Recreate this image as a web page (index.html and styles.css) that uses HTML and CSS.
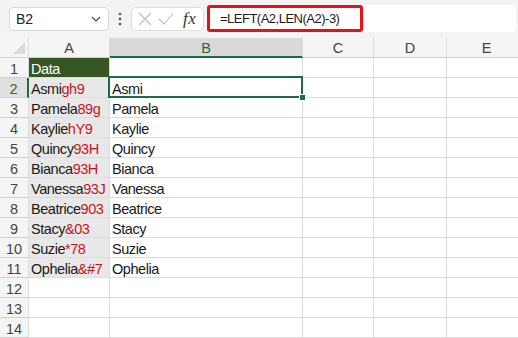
FILE: index.html
```html
<!DOCTYPE html>
<html>
<head>
<meta charset="utf-8">
<link rel="stylesheet" href="styles.css">
</head>
<body>
<div class="app">
  <div class="toolbar">
    <div class="namebox">
      <span class="nb-text">B2</span>
      <svg class="chev" width="10" height="6" viewBox="0 0 10 6"><path d="M1 1 L5 5 L9 1" fill="none" stroke="#444" stroke-width="1.2"/></svg>
    </div>
    <svg class="kebab" width="4" height="14" viewBox="0 0 4 14"><circle cx="2" cy="2" r="1.3" fill="#555"/><circle cx="2" cy="7" r="1.3" fill="#555"/><circle cx="2" cy="12" r="1.3" fill="#555"/></svg>
    <div class="fnbox">
      <svg class="ico" width="14" height="14" viewBox="0 0 14 14"><path d="M1 1 L13 13 M13 1 L1 13" fill="none" stroke="#bdbdbd" stroke-width="1.1"/></svg>
      <svg class="ico" width="16" height="14" viewBox="0 0 16 14"><path d="M1 7 L6 12 L15 1.5" fill="none" stroke="#bdbdbd" stroke-width="1.1"/></svg>
      <span class="fx">fx</span>
    </div>
    <div class="formula">
      <span class="hl">=LEFT(A2,LEN(A2)-3)</span>
    </div>
  </div>
  <div class="sheet">
    <div class="h corner"></div>
    <div class="h col">A</div>
    <div class="h col selcol">B</div>
    <div class="h col">C</div>
    <div class="h col">D</div>
    <div class="h col">E</div>

    <div class="h row">1</div>
    <div class="c head">Data</div>
    <div class="c"></div><div class="c"></div><div class="c"></div><div class="c"></div>

    <div class="h row selrow">2</div>
    <div class="c src">Asmi<span class="r">gh9</span></div>
    <div class="c sel">Asmi<span class="handle"></span></div><div class="c"></div><div class="c"></div><div class="c"></div>

    <div class="h row">3</div>
    <div class="c src">Pamela<span class="r">89g</span></div>
    <div class="c">Pamela</div><div class="c"></div><div class="c"></div><div class="c"></div>

    <div class="h row">4</div>
    <div class="c src">Kaylie<span class="r">hY9</span></div>
    <div class="c">Kaylie</div><div class="c"></div><div class="c"></div><div class="c"></div>

    <div class="h row">5</div>
    <div class="c src">Quincy<span class="r">93H</span></div>
    <div class="c">Quincy</div><div class="c"></div><div class="c"></div><div class="c"></div>

    <div class="h row">6</div>
    <div class="c src">Bianca<span class="r">93H</span></div>
    <div class="c">Bianca</div><div class="c"></div><div class="c"></div><div class="c"></div>

    <div class="h row">7</div>
    <div class="c src">Vanessa<span class="r">93J</span></div>
    <div class="c">Vanessa</div><div class="c"></div><div class="c"></div><div class="c"></div>

    <div class="h row">8</div>
    <div class="c src">Beatrice<span class="r">903</span></div>
    <div class="c">Beatrice</div><div class="c"></div><div class="c"></div><div class="c"></div>

    <div class="h row">9</div>
    <div class="c src">Stacy<span class="r">&amp;03</span></div>
    <div class="c">Stacy</div><div class="c"></div><div class="c"></div><div class="c"></div>

    <div class="h row">10</div>
    <div class="c src">Suzie<span class="r">*78</span></div>
    <div class="c">Suzie</div><div class="c"></div><div class="c"></div><div class="c"></div>

    <div class="h row">11</div>
    <div class="c src">Ophelia<span class="r">&amp;#7</span></div>
    <div class="c">Ophelia</div><div class="c"></div><div class="c"></div><div class="c"></div>

    <div class="h row">12</div>
    <div class="c"></div><div class="c"></div><div class="c"></div><div class="c"></div><div class="c"></div>

    <div class="h row">13</div>
    <div class="c"></div><div class="c"></div><div class="c"></div><div class="c"></div><div class="c"></div>

    <div class="h row">14</div>
    <div class="c"></div><div class="c"></div><div class="c"></div><div class="c"></div><div class="c"></div>
  </div>
</div>
</body>
</html>
```

FILE: styles.css
```css
* { box-sizing: border-box; }
html, body { margin: 0; padding: 0; }
body {
  width: 518px;
  height: 338px;
  overflow: hidden;
  background: #ffffff;
  font-family: "Liberation Sans", Arial, sans-serif;
  color: #1a1a1a;
}
.app { width: 518px; height: 338px; overflow: hidden; }

.toolbar {
  height: 38px;
  background: #f3f3f3;
  display: flex;
  align-items: center;
  padding-left: 9px;
  padding-bottom: 1px;
}
.namebox {
  width: 100px;
  height: 24px;
  background: #fff;
  border: 1px solid #d9d9d9;
  border-radius: 5px;
  display: flex;
  align-items: center;
  justify-content: space-between;
  padding: 0 7px 0 6px;
  font-size: 14px;
  color: #222;
}
.chev { margin-top: 1px; }
.kebab { margin-left: 9px; margin-right: 9px; }
.fnbox {
  width: 73px;
  height: 24px;
  background: #fff;
  border: 1px solid #dedede;
  border-radius: 5px;
  display: flex;
  align-items: center;
  padding-left: 6px;
  gap: 6px;
}
.fx {
  font-family: "Liberation Serif", "Times New Roman", serif;
  font-style: italic;
  font-size: 17px;
  color: #333;
  margin-left: 3px;
  letter-spacing: 0.5px;
}
.formula {
  flex: 1;
  height: 27px;
  margin-left: 3px;
  margin-right: 2px;
  background: #fff;
  border-radius: 4px;
  display: flex;
  align-items: stretch;
}
.hl {
  width: 156px;
  border: 3px solid #e3121b;
  border-radius: 3px;
  display: flex;
  align-items: center;
  padding-left: 10px;
  font-size: 13px;
  letter-spacing: -0.5px;
  color: #1a1a1a;
}

.sheet {
  display: grid;
  grid-template-columns: 29px 81px 193px 71px 73px 80px;
  grid-template-rows: 20px repeat(14, 20px);
}
.h {
  background: #f5f5f5;
  color: #444;
  font-size: 14.5px;
  display: flex;
  align-items: center;
  justify-content: center;
  border-right: 1px solid #dcdcdc;
  border-bottom: 1px solid #d0d0d0;
}
.col { padding-top: 1px; }
.corner { position: relative; }
.corner::after {
  content: "";
  position: absolute;
  right: 3px;
  bottom: 3px;
  width: 0;
  height: 0;
  border-left: 12px solid transparent;
  border-bottom: 12px solid #dadada;
}
.row { padding-top: 2px; }
.selcol {
  background: #d9d9d9;
  color: #1d6b40;
  border-bottom: 2px solid #1d6b40;
}
.selrow {
  background: #e0e0e0;
  color: #1d6b40;
  border-right: 2px solid #1d6b40;
}
.c {
  border-right: 1px solid #dcdcdc;
  border-bottom: 1px solid #dcdcdc;
  font-size: 14.5px;
  letter-spacing: -0.45px;
  display: flex;
  align-items: center;
  padding: 2px 0 0 2px;
  white-space: nowrap;
}
.head {
  background: #375623;
  color: #fff;
}
.src { background: #e8e8e8; }
.r { color: #c8151f; }
.sel { position: relative; }
.sel::after {
  content: "";
  position: absolute;
  left: -2px;
  top: -2px;
  right: -1px;
  bottom: -1px;
  border: 2px solid #1d6b40;
  pointer-events: none;
}
.handle {
  position: absolute;
  right: -4px;
  bottom: -4px;
  width: 7px;
  height: 7px;
  background: #1d6b40;
  border: 1px solid #fff;
  z-index: 2;
}
```
